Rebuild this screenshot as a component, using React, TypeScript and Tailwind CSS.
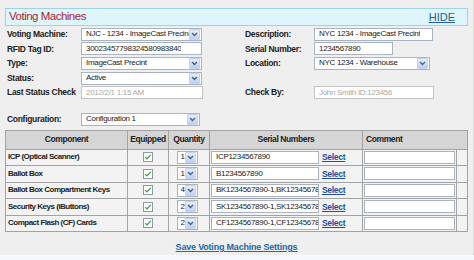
import React from "react";

const Arrow = () => (
  <span className="ml-auto flex h-[11px] w-[11px] shrink-0 items-center justify-center rounded-[1px] border border-[#c3d2f0] bg-gradient-to-b from-[#e6eefc] to-[#bfd0f3]">
    <svg width="7" height="5" viewBox="0 0 7 5">
      <path d="M1 1l2.5 2.5L6 1" fill="none" stroke="#4a5f8c" strokeWidth="1.4" />
    </svg>
  </span>
);

function Select({ value, className }: { value: string; className: string }) {
  return (
    <div className={`flex h-[13px] items-center border border-[#a9b4c2] bg-white pr-px text-[8px] leading-none tracking-[-0.3px] text-[#222] ${className}`}>
      <span className="overflow-hidden whitespace-nowrap">{value}</span>
      <Arrow />
    </div>
  );
}

function Input({ value, className, disabled }: { value: string; className: string; disabled?: boolean }) {
  return (
    <div
      className={`flex h-[13px] items-center overflow-hidden whitespace-nowrap border bg-white pl-[4px] text-[8px] leading-none tracking-[-0.3px] ${
        disabled ? "border-[#c4c4c4] text-[#a9a9a9]" : "border-[#a9b4c2] text-[#222]"
      } ${className}`}
    >
      <span className="overflow-hidden">{value}</span>
    </div>
  );
}

const Label = ({ children }: { children: React.ReactNode }) => (
  <div className="flex items-center whitespace-nowrap text-[8.5px] font-bold tracking-[-0.3px] text-[#222]">{children}</div>
);

const Check = () => (
  <span className="inline-flex h-[10px] w-[10px] items-center justify-center border border-[#8f9aa6] bg-white">
    <svg width="8" height="8" viewBox="0 0 8 8">
      <path d="M1.2 4.2l1.8 1.8 3.8-4.2" fill="none" stroke="#3a9e3a" strokeWidth="1.2" />
    </svg>
  </span>
);

const rows = [
  { name: "ICP (Optical Scanner)", qty: "1", serial: "ICP1234567890" },
  { name: "Ballot Box", qty: "1", serial: "B1234567890" },
  { name: "Ballot Box Compartment Keys", qty: "4", serial: "BK1234567890-1,BK123456789" },
  { name: "Security Keys (iButtons)", qty: "2", serial: "SK1234567890-1,SK123456789" },
  { name: "Compact Flash (CF) Cards", qty: "2", serial: "CF1234567890-1,CF123456789" },
];

export default function App() {
  return (
    <div className="h-[260px] w-[474px] bg-[#f6f9fb] font-['Liberation_Sans',Arial,sans-serif]">
      <div className="h-[255px] border-r border-[#dcdcdc] bg-[#efefef] px-[5px] pt-[8px]">
        {/* Title bar */}
        <div className="flex h-[18px] w-[463px] items-center justify-between border border-[#9fd2e2] bg-[#def5fb] pl-[3px] pr-[12px]">
          <span className="text-[11.5px] leading-none tracking-[-0.5px] text-[#ad1f33]">Voting Machines</span>
          <a className="text-[11px] leading-none text-[#1f5f9f] underline">HIDE</a>
        </div>

        {/* Form */}
        <div className="grid grid-cols-[74px_122px_42px_69px_122px] grid-rows-[14.6px_14.6px_14.6px_14.6px_14.6px_12px_14.6px] pl-[2px] pt-px">
          <Label>Voting Machine:</Label>
          <div className="flex items-center"><Select value="NJC - 1234 - ImageCast Precinct" className="w-[121px] pl-[4px]" /></div>
          <div />
          <Label>Description:</Label>
          <div className="flex items-center"><Input value="NYC 1234 - ImageCast Precint" className="w-[119px]" /></div>

          <Label>RFID Tag ID:</Label>
          <div className="flex items-center"><Input value="30023457798324580983840" className="w-[121px]" /></div>
          <div />
          <Label>Serial Number:</Label>
          <div className="flex items-center"><Input value="1234567890" className="w-[79px]" /></div>

          <Label>Type:</Label>
          <div className="flex items-center"><Select value="ImageCast Precint" className="w-[121px] pl-[4px]" /></div>
          <div />
          <Label>Location:</Label>
          <div className="flex items-center"><Select value="NYC 1234 - Warehouse" className="w-[116px] pl-[4px]" /></div>

          <Label>Status:</Label>
          <div className="flex items-center"><Select value="Active" className="w-[121px] pl-[4px]" /></div>
          <div />
          <div />
          <div />

          <Label>Last Status Check</Label>
          <div className="flex items-center"><Input value="2012/2/1 1:15 AM" disabled className="w-[122px]" /></div>
          <div />
          <Label>Check By:</Label>
          <div className="flex items-center"><Input value="John Smith ID:123456" disabled className="w-[120px]" /></div>

          <div className="col-span-5" />

          <Label>Configuration:</Label>
          <div className="flex items-center"><Select value="Configuration 1" className="w-[119px] pl-[4px]" /></div>
          <div />
          <div />
          <div />
        </div>

        {/* Components table */}
        <table className="mt-[3px] w-[462px] table-fixed border-collapse text-[#222]">
          <colgroup>
            <col className="w-[122px]" />
            <col className="w-[41px]" />
            <col className="w-[41px]" />
            <col className="w-[153px]" />
            <col className="w-[94px]" />
            <col className="w-[11px]" />
          </colgroup>
          <thead>
            <tr className="h-[19px] bg-[#d5d5d5] text-[8.5px] font-bold tracking-[-0.4px]">
              <th className="border border-[#a3a3a3] text-center">Component</th>
              <th className="border border-[#a3a3a3] text-center">Equipped</th>
              <th className="border border-[#a3a3a3] text-center">Quantity</th>
              <th className="border border-[#a3a3a3] text-center">Serial Numbers</th>
              <th colSpan={2} className="border border-[#a3a3a3] pl-[3px] text-left">Comment</th>
            </tr>
          </thead>
          <tbody>
            {rows.map((r) => (
              <tr key={r.name} className="h-[16.5px] bg-[#f3f3f3]">
                <td className="whitespace-nowrap border border-[#a3a3a3] pl-[2px] text-[8px] font-bold tracking-[-0.5px]">{r.name}</td>
                <td className="border border-[#a3a3a3] text-center align-middle">
                  <div className="flex justify-center"><Check /></div>
                </td>
                <td className="border border-[#a3a3a3] align-middle">
                  <div className="flex justify-center pr-[4px]">
                    <Select value={r.qty} className="w-[21px] pl-[3px]" />
                  </div>
                </td>
                <td className="border border-[#a3a3a3] align-middle">
                  <div className="flex items-center pl-[1px]">
                    <Input value={r.serial} className="w-[108px] shrink-0" />
                    <a className="ml-[3px] text-[8.5px] font-bold leading-none tracking-[-0.3px] text-[#1f4fa3] underline">Select</a>
                  </div>
                </td>
                <td className="border border-[#a3a3a3] align-middle">
                  <div className="flex pl-px">
                    <Input value="" className="w-[91px]" />
                  </div>
                </td>
                <td className="border border-[#a3a3a3]" />
              </tr>
            ))}
          </tbody>
        </table>

        {/* Save link */}
        <div className="mt-[11px] flex justify-center">
          <a className="text-[9px] font-bold leading-none tracking-[-0.2px] text-[#2268ae] underline">Save Voting Machine Settings</a>
        </div>
      </div>
    </div>
  );
}
